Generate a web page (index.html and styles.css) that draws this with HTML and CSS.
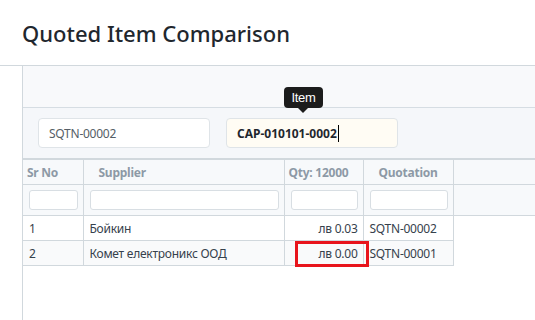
FILE: index.html
```html
<!DOCTYPE html>
<html>
<head>
<meta charset="utf-8">
<link rel="stylesheet" href="styles.css">
</head>
<body>
<h1 class="title">Quoted Item Comparison</h1>
<div class="page">
  <div class="panel">
    <div class="band"></div>
    <div class="filters">
      <div class="field"><input class="inp" value="SQTN-00002"></div>
      <div class="field item-field">
        <input class="inp inp-item" value="CAP-010101-0002"><span class="caret"></span>
        <div class="tip">Item</div>
      </div>
    </div>
    <table class="grid">
      <colgroup>
        <col class="c-sr"><col class="c-sup"><col class="c-qty"><col class="c-quo"><col>
      </colgroup>
      <thead>
        <tr class="head">
          <th class="h-sr">Sr No</th>
          <th class="h-sup">Supplier</th>
          <th class="h-qty">Qty: 12000</th>
          <th class="h-quo">Quotation</th>
          <th class="blank"></th>
        </tr>
        <tr class="frow">
          <td><input class="finp"></td>
          <td><input class="finp"></td>
          <td><input class="finp"></td>
          <td><input class="finp"></td>
          <td class="blank"></td>
        </tr>
      </thead>
      <tbody>
        <tr>
          <td>1</td><td>Бойкин</td><td class="num">лв 0.03</td><td>SQTN-00002</td><td class="empty"></td>
        </tr>
        <tr class="alt">
          <td>2</td><td>Комет електроникс ООД</td><td class="num mark-cell">лв 0.00<span class="mark"></span></td><td>SQTN-00001</td><td class="empty"></td>
        </tr>
      </tbody>
    </table>
  </div>
</div>
</body>
</html>
```
FILE: styles.css
```css
html, body {
  margin: 0;
  padding: 0;
  background: #fff;
  font-family: "Noto Sans", "Open Sans", sans-serif;
  color: #36414c;
  overflow: hidden;
  height: 320px;
}
.title {
  margin: 0;
  height: 65px;
  box-sizing: border-box;
  padding: 16px 0 0 22px;
  font-size: 22px;
  font-weight: 500;
  line-height: 34px;
  color: #1f272e;
  letter-spacing: 0;
}
.page {
  border-top: 1px solid #d1d8dd;
  padding-left: 22px;
  height: 260px;
}
.panel {
  border-left: 1px solid #d1d8dd;
  height: 100%;
}
.band {
  height: 41px;
  background: #f8f9fb;
  border-bottom: 1px solid #d6dde3;
}
.filters {
  display: flex;
  gap: 16px;
  padding: 10px 0 0 15px;
  height: 40px;
  background: #f5f7fa;
  border-bottom: 1px solid #d1d8dd;
}
.field {
  position: relative;
  width: 172px;
  height: 30px;
}
.inp {
  box-sizing: border-box;
  width: 100%;
  height: 30px;
  border: 1px solid #dfe4e8;
  border-radius: 4px;
  background: #fff;
  padding: 0 10px;
  font-family: inherit;
  font-size: 12px;
  letter-spacing: -0.25px;
  color: #555e66;
  outline: none;
}
.inp-item {
  background: #fffcf4;
  font-weight: 700;
  color: #1f272e;
  letter-spacing: 0;
}
.caret {
  position: absolute;
  left: 112px;
  top: 7px;
  width: 1px;
  height: 17px;
  background: #000;
}
.tip {
  position: absolute;
  left: 58px;
  top: -31px;
  width: 39px;
  height: 21px;
  background: #1c1c1c;
  color: #fff;
  border-radius: 4px;
  font-family: "Liberation Sans", Arial, sans-serif;
  font-size: 13px;
  line-height: 21px;
  text-align: center;
  letter-spacing: -0.3px;
}
.tip::after {
  content: "";
  position: absolute;
  left: 14px;
  bottom: -5px;
  border-left: 5px solid transparent;
  border-right: 5px solid transparent;
  border-top: 5px solid #1c1c1c;
}
.grid {
  border-collapse: collapse;
  table-layout: fixed;
  width: 513px;
  font-size: 12px;
  letter-spacing: -0.25px;
}
.c-sr { width: 60px; }
.c-sup { width: 201px; }
.c-qty { width: 79px; }
.c-quo { width: 90px; }
.grid th, .grid td {
  border: 1px solid #d1d8dd;
  padding: 0 5px 0 6px;
  white-space: nowrap;
  overflow: visible;
}
.grid tr > :first-child { border-left: none; }
.grid tr > :last-child { border-right: none; }
.head th {
  height: 24px;
  background: #f7f9fb;
  color: #8d99a6;
  font-weight: 700;
  text-align: left;
  font-size: 12px;
}
.grid th.h-sr { padding-left: 4px; }
.grid th.h-sup { padding-left: 15px; }
.grid th.h-qty { padding-left: 4px; }
.grid th.h-quo { padding-left: 15px; }
.frow td {
  height: 30px;
  background: #f7f9fb;
}
.grid .blank { background: #f7f9fb; }
.finp {
  box-sizing: border-box;
  display: block;
  width: 100%;
  height: 20px;
  border: 1px solid #d8dee3;
  border-radius: 3px;
  background: #fff;
  outline: none;
}
.grid tbody td {
  height: 24px;
  color: #36414c;
}
.grid tbody .alt td { background: #f9fafb; }
.grid tbody .alt td.empty,
.grid tbody td.empty {
  background: #fff;
  border-left: 1px solid #d1d8dd;
  border-bottom: none;
  border-top: none;
}
.num { text-align: right; }
.mark-cell { position: relative; }
.mark {
  position: absolute;
  left: 10px;
  top: 0px;
  width: 74px;
  height: 26px;
  box-sizing: border-box;
  border: 3px solid #e8141c;
  z-index: 1;
}
```
